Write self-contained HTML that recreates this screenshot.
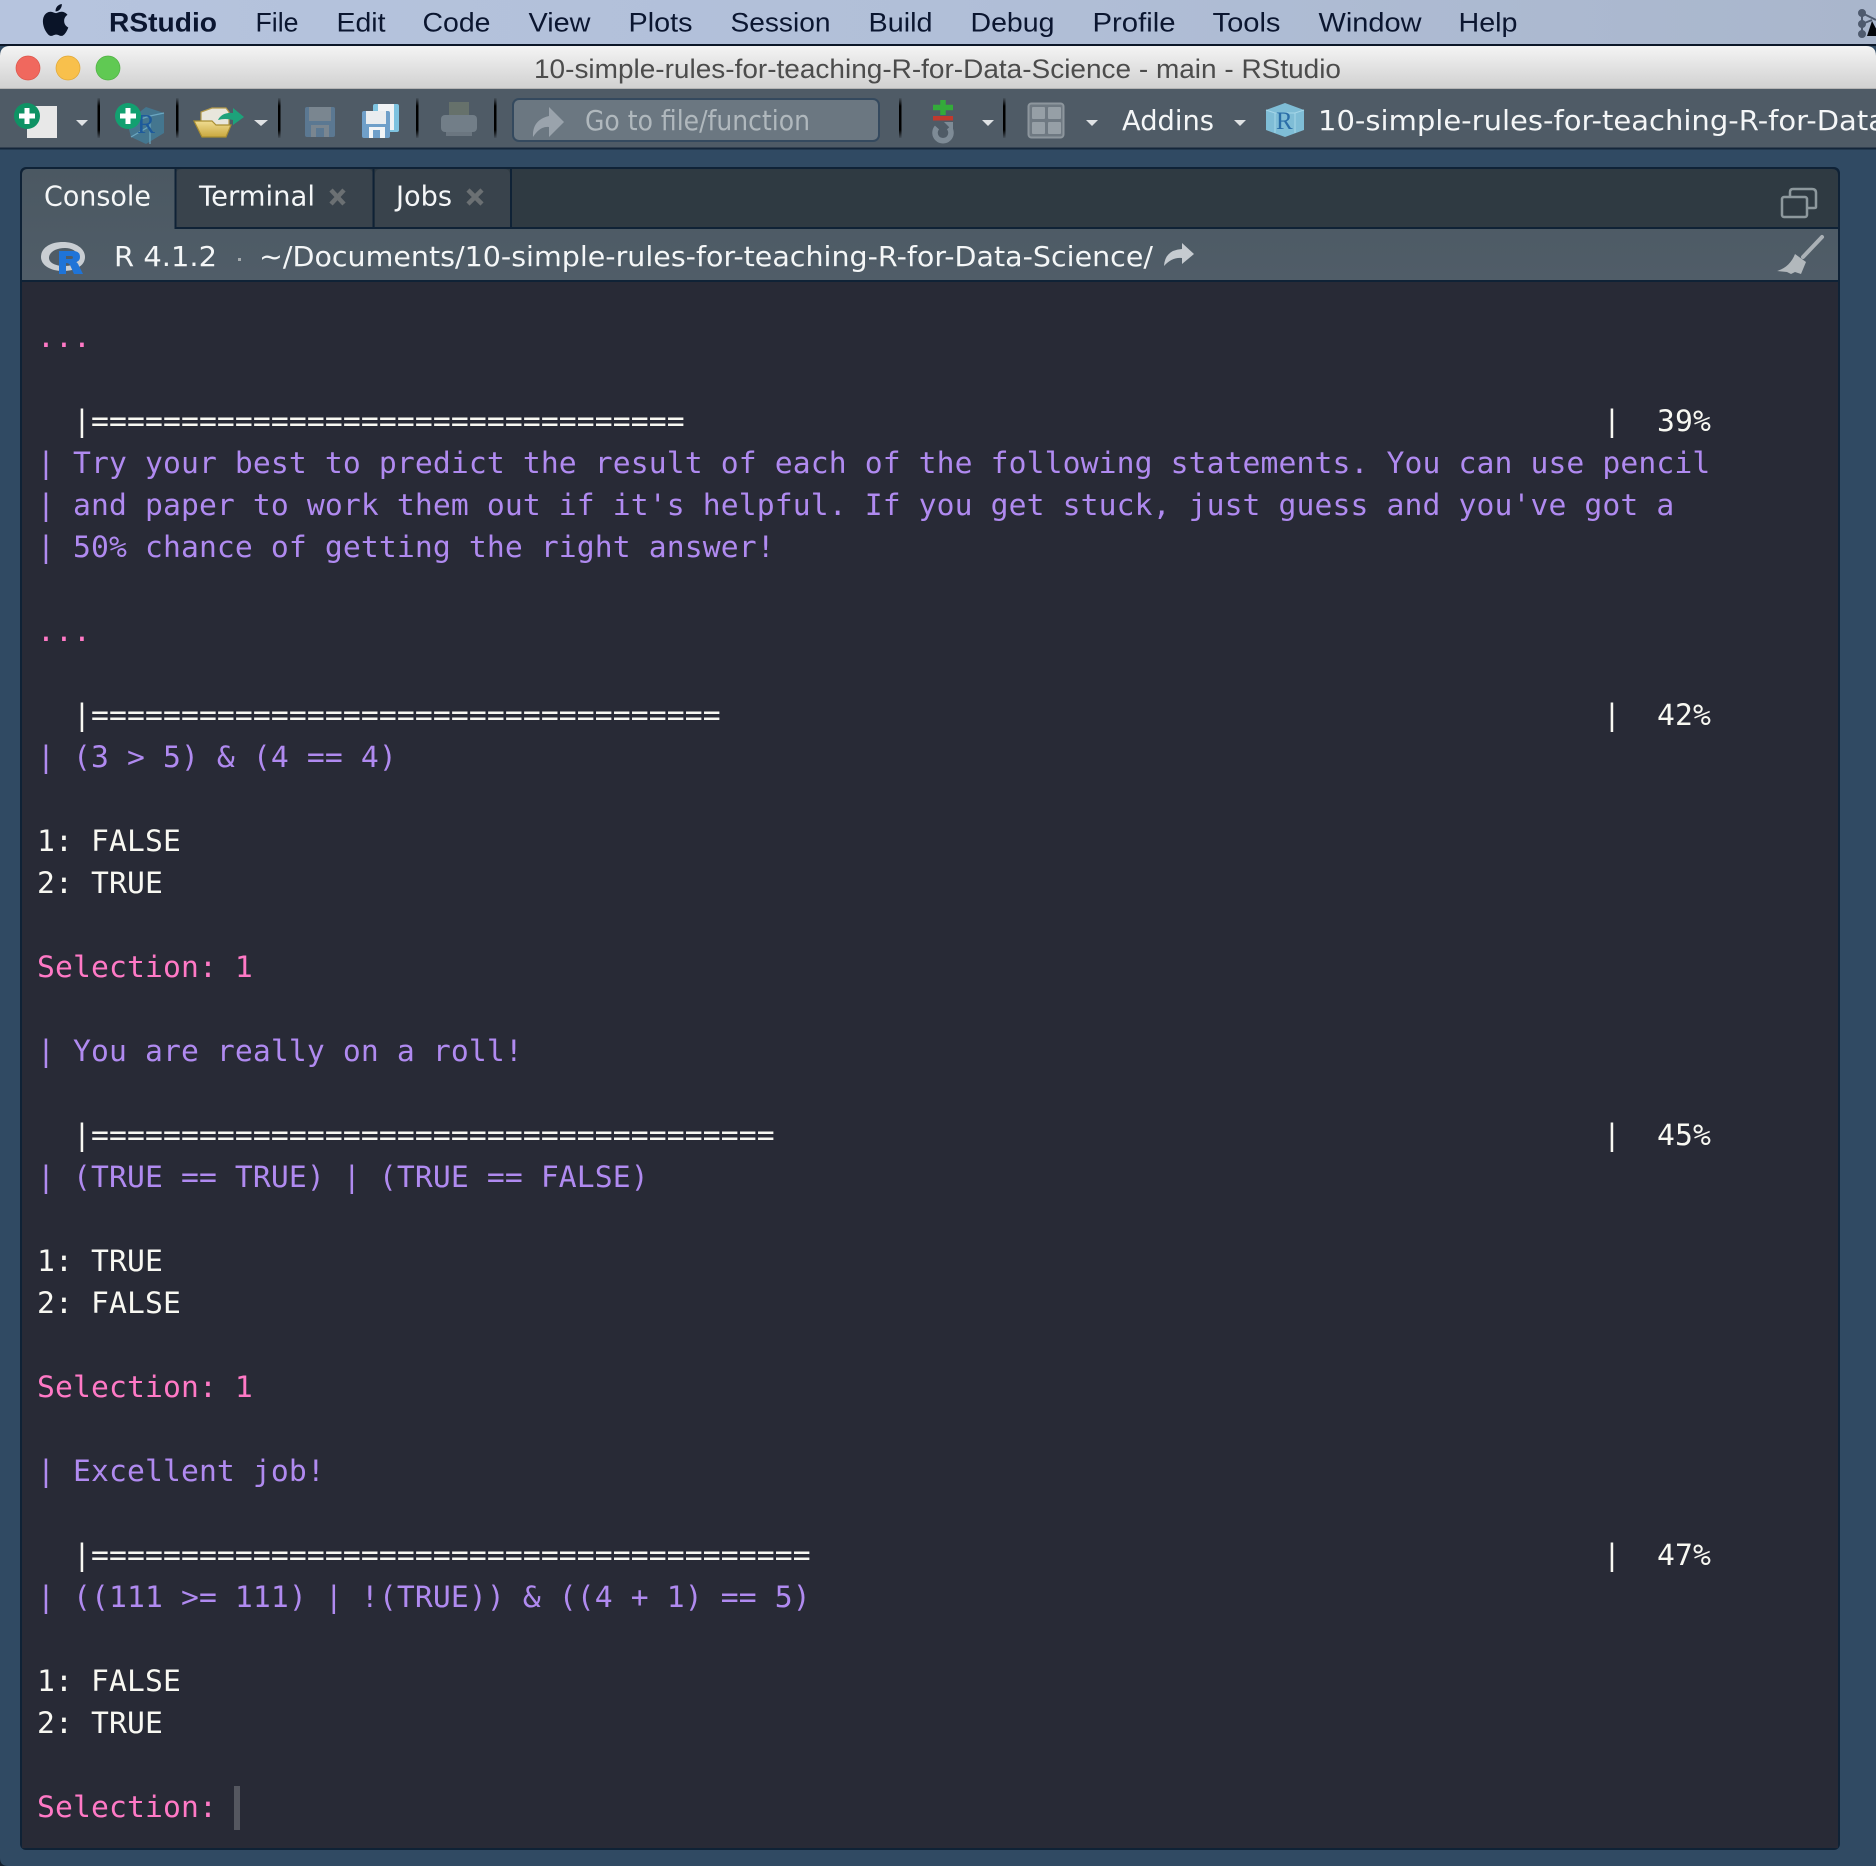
<!DOCTYPE html>
<html><head><meta charset="utf-8"><title>RStudio</title>
<style>
html,body{margin:0;padding:0;background:#304a63;width:1876px;height:1866px;overflow:hidden}
#wrap{position:relative;width:1876px;height:1866px;overflow:hidden}
svg.chrome{position:absolute;left:0;top:0}
pre{position:absolute;left:37px;top:317px;margin:0;font:29.7px/42px "DejaVu Sans Mono","Liberation Mono",monospace;letter-spacing:.12px;color:#f8f8f2;white-space:pre}
.p{color:#b08af0}.k{color:#ff79c6}
.r{position:absolute;left:1566px}
.cur{position:absolute;left:234px;top:1786px;width:6px;height:44px;background:#555760}
text{white-space:pre}
.m{font-family:"Liberation Sans",sans-serif;font-size:27px;fill:#0b1630}
.u{font-family:"DejaVu Sans",sans-serif;font-size:27.5px;fill:#f4f6f7}
</style></head><body><div id="wrap">
<svg class="chrome" width="1876" height="1866" viewBox="0 0 1876 1866" xmlns="http://www.w3.org/2000/svg">
<defs>
<linearGradient id="mb" x1="0" x2="1" y1="0" y2="0"><stop offset="0" stop-color="#b6c4de"/><stop offset=".5" stop-color="#b1bfd8"/><stop offset="1" stop-color="#a9b6cc"/></linearGradient>
<linearGradient id="tb" x1="0" x2="0" y1="0" y2="1"><stop offset="0" stop-color="#f4f4f4"/><stop offset="1" stop-color="#d0d0d0"/></linearGradient>
<linearGradient id="sep" x1="0" x2="0" y1="0" y2="1"><stop offset="0" stop-color="#000" stop-opacity=".1"/><stop offset=".2" stop-color="#000"/><stop offset=".8" stop-color="#000"/><stop offset="1" stop-color="#000" stop-opacity=".1"/></linearGradient>
<linearGradient id="tab" x1="0" x2="0" y1="0" y2="1"><stop offset="0" stop-color="#4b5862"/><stop offset="1" stop-color="#505d68"/></linearGradient>
<linearGradient id="fold" x1="0" x2="0" y1="0" y2="1"><stop offset="0" stop-color="#f0dc92"/><stop offset="1" stop-color="#c9a83f"/></linearGradient>
</defs>
<!-- desktop / menu bar -->
<rect width="1876" height="1866" fill="#304a63"/>
<rect width="1876" height="44" fill="url(#mb)"/>
<rect y="44" width="1876" height="2" fill="#0c1728"/>
<path transform="translate(40 4) scale(1.3 1.33)" fill="#0a1428" d="M12.152 6.896c-.948 0-2.415-1.078-3.96-1.04-2.04.027-3.91 1.183-4.961 3.014-2.117 3.675-.546 9.103 1.519 12.09 1.013 1.454 2.208 3.09 3.792 3.039 1.52-.065 2.09-.987 3.935-.987 1.831 0 2.35.987 3.96.948 1.637-.026 2.676-1.48 3.676-2.948 1.156-1.688 1.636-3.325 1.662-3.415-.039-.013-3.182-1.221-3.22-4.857-.026-3.04 2.48-4.494 2.597-4.559-1.429-2.09-3.623-2.324-4.39-2.376-2-.156-3.675 1.09-4.61 1.09zM15.53 3.83c.843-1.012 1.4-2.427 1.245-3.83-1.207.052-2.662.805-3.532 1.818-.78.896-1.454 2.338-1.273 3.714 1.338.104 2.715-.688 3.559-1.701"/>
<g class="m">
<text x="109" y="31.500" font-weight="bold" textLength="108" lengthAdjust="spacingAndGlyphs">RStudio</text>
<text x="255.500" y="31.500" textLength="43" lengthAdjust="spacingAndGlyphs">File</text>
<text x="336.500" y="31.500" textLength="49" lengthAdjust="spacingAndGlyphs">Edit</text>
<text x="422.500" y="31.500" textLength="68" lengthAdjust="spacingAndGlyphs">Code</text>
<text x="528.500" y="31.500" textLength="62" lengthAdjust="spacingAndGlyphs">View</text>
<text x="628.500" y="31.500" textLength="64" lengthAdjust="spacingAndGlyphs">Plots</text>
<text x="730.500" y="31.500" textLength="100" lengthAdjust="spacingAndGlyphs">Session</text>
<text x="868.500" y="31.500" textLength="64" lengthAdjust="spacingAndGlyphs">Build</text>
<text x="970.500" y="31.500" textLength="84" lengthAdjust="spacingAndGlyphs">Debug</text>
<text x="1092.500" y="31.500" textLength="83" lengthAdjust="spacingAndGlyphs">Profile</text>
<text x="1212.500" y="31.500" textLength="68" lengthAdjust="spacingAndGlyphs">Tools</text>
<text x="1318.500" y="31.500" textLength="103" lengthAdjust="spacingAndGlyphs">Window</text>
<text x="1458.500" y="31.500" textLength="59" lengthAdjust="spacingAndGlyphs">Help</text>
</g>
<!-- status icon right -->
<g fill="#4e5a6e" stroke="#4e5a6e" stroke-width="2"><circle cx="1862" cy="13" r="3"/><circle cx="1862" cy="24" r="3"/><circle cx="1862" cy="34" r="3"/><path d="M1862 13L1876 20M1862 24L1872 20M1862 13V34" fill="none"/></g>
<path d="M1872 21L1880 36H1867Z" fill="#05070c"/>
<!-- title bar -->
<path d="M0 89V56Q0 46 10 46H1866Q1876 46 1876 56V89Z" fill="url(#tb)"/>
<rect y="88" width="1876" height="1" fill="#b4b4b4"/>
<circle cx="28" cy="68" r="12" fill="#f0685e" stroke="#dc5449" stroke-width=".7"/>
<circle cx="68" cy="68" r="12" fill="#f8c04c" stroke="#e0a735" stroke-width=".7"/>
<circle cx="108" cy="68" r="12" fill="#60c953" stroke="#4fb043" stroke-width=".7"/>
<text x="534" y="78" font-family="Liberation Sans,sans-serif" font-size="26.5" fill="#4c4c4c" textLength="807" lengthAdjust="spacingAndGlyphs">10-simple-rules-for-teaching-R-for-Data-Science - main - RStudio</text>
<!-- toolbar -->
<rect y="89" width="1876" height="59" fill="#4f5b66"/>
<rect y="147.500" width="1876" height="2" fill="#14263a"/>
<g fill="url(#sep)"><rect x="97.500" y="98" width="2.500" height="40"/><rect x="176" y="98" width="2.500" height="40"/><rect x="278" y="98" width="2.500" height="40"/><rect x="416" y="98" width="2.500" height="40"/><rect x="494" y="98" width="2.500" height="40"/><rect x="899" y="98" width="2.500" height="40"/><rect x="1003" y="98" width="2.500" height="40"/></g>
<!-- new file -->
<rect x="27" y="106" width="30" height="32" fill="#e8e8e8"/>
<circle cx="27" cy="116" r="13" fill="#0f9264"/>
<path d="M27 108V124M19 116H35" stroke="#fff" stroke-width="5"/>
<g fill="#dfe2e4"><path d="M76 120H88L82 126Z"/><path d="M254 120H268L261 126Z"/><path d="M982 120H994L988 126Z"/><path d="M1086 120H1098L1092 126Z"/><path d="M1234 120H1246L1240 126Z"/></g>
<!-- new project -->
<path d="M127 122L146 107L164 113V133L146 144L131 137Z" fill="#44768f"/>
<path d="M131 122L150 116L164 113M150 116V144M131 137L150 126" stroke="#6ba7c1" stroke-width="1.200" fill="none"/>
<text x="137" y="133" font-family="Liberation Serif,serif" font-size="27" fill="#1d5a9c">R</text>
<circle cx="128" cy="116" r="13" fill="#12a070"/>
<path d="M128 108V124M120 116H136" stroke="#fff" stroke-width="5"/>
<!-- folder -->
<path d="M201 122V112L212 108H226L229 112V128H201Z" fill="#e8e6dc" stroke="#b39a4a" stroke-width="1.200"/>
<path d="M194 121H212L216 125H231L226 137H202Z" fill="url(#fold)" stroke="#a98e32" stroke-width="1.200"/>
<path d="M218 120Q222 112 233 113V108L244 117L233 125V120Q225 118 218 120Z" fill="#1da27a"/>
<!-- save -->
<rect x="305" y="107" width="30" height="30" rx="2" fill="#5b7892"/>
<rect x="309" y="107" width="22" height="14" fill="#7a8690"/>
<path d="M311 137V125H329V137H324V128H316V137Z" fill="#7a8690"/>
<!-- save all -->
<rect x="373" y="104" width="26" height="28" rx="2" fill="#7ec3e0"/>
<rect x="378" y="104" width="16" height="26" fill="#f0f3f5"/>
<rect x="362" y="111" width="28" height="27" rx="2" fill="#6f9fc9"/>
<rect x="366" y="111" width="20" height="13" fill="#e9ecef"/>
<path d="M369 138V127H385V138H380V130H373V138Z" fill="#f2f4f6"/>
<!-- printer -->
<rect x="449" y="102" width="20" height="16" fill="#66716b"/>
<rect x="441" y="115" width="36" height="17" rx="4" fill="#727e88"/>
<rect x="446" y="132" width="26" height="4" fill="#6b7680"/>
<!-- go to -->
<rect x="513" y="99" width="366" height="42" rx="6" fill="#6b7781" stroke="#34495e" stroke-width="2"/>
<path d="M533 137Q532 120 549 116V107L564 122L549 137V127Q540 126 533 137Z" fill="#9aa3ac"/>
<text x="585" y="130" class="u" style="fill:#b0b8bd" textLength="225" lengthAdjust="spacingAndGlyphs">Go to file/function</text>
<!-- git -->
<path d="M933 107.500H953M943 100V115" stroke="#34ab3a" stroke-width="5.500"/>
<rect x="933" y="116" width="20" height="4.500" fill="#c13a2e"/>
<path d="M937 127.500A8 8 0 1 0 949 127.500" fill="none" stroke="#7e8b96" stroke-width="5.500"/>
<path d="M944 122H953V131Z" fill="#7e8b96"/>
<!-- grid -->
<rect x="1028.500" y="103.500" width="35" height="34" rx="3" fill="#6f7982" stroke="#8d969d" stroke-width="2"/>
<g fill="#969fa6"><rect x="1032" y="107" width="13" height="12" rx="1"/><rect x="1048" y="107" width="13" height="12" rx="1"/><rect x="1032" y="122" width="13" height="12" rx="1"/><rect x="1048" y="122" width="13" height="12" rx="1"/></g>
<text x="1122" y="130" class="u" textLength="92" lengthAdjust="spacingAndGlyphs">Addins</text>
<!-- project cube -->
<path d="M1285 103L1304 110V130L1285 137L1266 130V110Z" fill="#7fbdd6"/>
<path d="M1266 110L1275 113L1295 113L1304 110M1275 113V133M1295 113V133" stroke="#a5d6e8" stroke-width="1" fill="none"/>
<text x="1276" y="129" font-family="Liberation Serif,serif" font-size="25" fill="#2a6ea8">R</text>
<text x="1318" y="130" class="u" textLength="568" lengthAdjust="spacingAndGlyphs">10-simple-rules-for-teaching-R-for-Data</text>
<!-- panel -->
<rect x="20" y="167" width="1820" height="1683" rx="6" fill="#0f2236"/>
<path d="M22 229V175Q22 169 28 169H1832Q1838 169 1838 175V229Z" fill="#2f3a42"/>
<rect x="22" y="227" width="1816" height="2" fill="#0f2236"/>
<path d="M176 227V175Q176 169 182 169H367Q373 169 373 175V227Z" fill="#39434c"/>
<path d="M375 227V175Q375 169 381 169H504Q510 169 510 175V227Z" fill="#39434c"/>
<rect x="372.500" y="169" width="2" height="58" fill="#0f2236"/>
<rect x="510" y="169" width="2" height="58" fill="#0f2236"/>
<rect x="174.500" y="169" width="2" height="60" fill="#0f2236"/>
<path d="M22 280V175Q22 169 28 169H174.500V229H1838V280Z" fill="url(#tab)"/>
<rect x="22" y="282" width="1816" height="1566" fill="#282a36"/>
<g class="u">
<text x="44" y="205.500" textLength="107" lengthAdjust="spacingAndGlyphs">Console</text>
<text x="199" y="205.500" textLength="116" lengthAdjust="spacingAndGlyphs">Terminal</text>
<text x="396" y="205.500" textLength="56" lengthAdjust="spacingAndGlyphs">Jobs</text>
<text x="114" y="266" textLength="103" lengthAdjust="spacingAndGlyphs">R 4.1.2</text>
<text x="259" y="266" textLength="894" lengthAdjust="spacingAndGlyphs">~/Documents/10-simple-rules-for-teaching-R-for-Data-Science/</text>
</g>
<path d="M331 190L344 204M344 190L331 204M468 190L482 204M482 190L468 204" stroke="#6b7073" stroke-width="4.500"/>
<rect x="238" y="258" width="3" height="3" fill="#a6acb0"/>
<!-- R logo -->
<path fill-rule="evenodd" d="M63 242C75 242 85 248 85 257C85 266 75 271 63 271C50 271 41 265 41 257C41 248 50 242 63 242ZM65 248C56 248 49 252 49 258C49 263 56 266 64 266C73 266 78 263 78 258C78 252 73 248 65 248Z" fill="#c9ced3"/>
<path fill-rule="evenodd" d="M59 251H73Q80 251 80 257Q80 261 76 262Q78 263 79 266L83 274H74L70 265Q69 263 66 263V274H59ZM66 256V259H71Q73 259 73 257.500Q73 256 71 256Z" fill="#1f74d8"/>
<!-- share arrow -->
<path d="M1164 266Q1165 250 1182 249V243L1194 254L1182 264V258Q1172 257 1164 266Z" fill="#c6cbd0"/>
<!-- window icons -->
<g fill="none" stroke="#8d989d" stroke-width="2.500"><path d="M1790 196V192Q1790 189 1793 189H1812Q1816 189 1816 193V207Q1816 208 1814 208H1808"/><rect x="1782" y="197" width="25" height="20" rx="2"/></g>
<!-- broom -->
<path d="M1822 237L1803 257" stroke="#aab1b6" stroke-width="4" stroke-linecap="round"/>
<path d="M1795 254L1806 262L1801 274L1795 272L1791 274L1787 272L1777 271Q1790 267 1795 254Z" fill="#b2b8bc"/>
<!-- window corners -->
<path d="M0 1866V1858Q0 1866 8 1866Z" fill="#14202e"/>
</svg>
<pre id="con"><span class="k">...</span>

  |=================================<span class="r">|  39%</span>
<span class="p">| Try your best to predict the result of each of the following statements. You can use pencil
| and paper to work them out if it's helpful. If you get stuck, just guess and you've got a
| 50% chance of getting the right answer!</span>

<span class="k">...</span>

  |===================================<span class="r">|  42%</span>
<span class="p">| (3 &gt; 5) &amp; (4 == 4)</span>

1: FALSE
2: TRUE

<span class="k">Selection: 1</span>

<span class="p">| You are really on a roll!</span>

  |======================================<span class="r">|  45%</span>
<span class="p">| (TRUE == TRUE) | (TRUE == FALSE)</span>

1: TRUE
2: FALSE

<span class="k">Selection: 1</span>

<span class="p">| Excellent job!</span>

  |========================================<span class="r">|  47%</span>
<span class="p">| ((111 &gt;= 111) | !(TRUE)) &amp; ((4 + 1) == 5)</span>

1: FALSE
2: TRUE

<span class="k">Selection: </span></pre>
<div class="cur"></div>
</div></body></html>
